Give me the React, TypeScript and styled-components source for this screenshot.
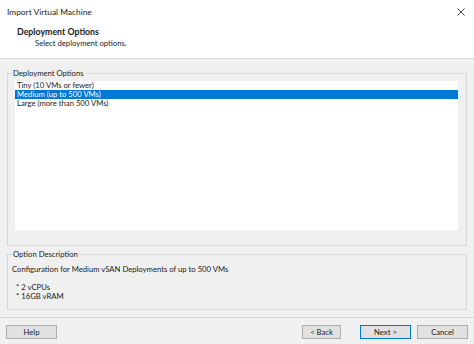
import React, { useState } from "react";
import styled, { createGlobalStyle } from "styled-components";

const GlobalStyle = createGlobalStyle`
  html, body {
    margin: 0;
    padding: 0;
    background: #f0f0f0;
  }
  * { box-sizing: border-box; }
`;

const FONT = `Lato, "Noto Sans", sans-serif`;
const TEXT = "7.7px";

const Window = styled.div`
  width: 474px;
  height: 344px;
  display: flex;
  flex-direction: column;
  background: #f0f0f0;
  font-family: ${FONT};
  font-size: ${TEXT};
  color: #1a1a1a;
  overflow: hidden;
`;

const Header = styled.div`
  height: 59px;
  background: #ffffff;
  border-bottom: 1px solid #d9d9d9;
  display: flex;
  flex-direction: column;
`;

const TitleBar = styled.div`
  height: 24px;
  display: flex;
  align-items: center;
  justify-content: space-between;
  padding: 0 8px 0 7px;
`;

const TitleText = styled.span`
  font-size: 8.4px;
  line-height: 10px;
`;

const CloseButton = styled.span`
  width: 10px;
  height: 10px;
  display: flex;
  align-items: center;
  justify-content: center;
`;

const PageTitle = styled.div`
  padding-left: 17px;
  margin-top: 3px;
  font-weight: 700;
  font-size: 8.8px;
  line-height: 10px;
`;

const PageSubtitle = styled.div`
  padding-left: 35px;
  margin-top: 1px;
  font-size: ${TEXT};
  line-height: 10px;
`;

const Body = styled.div`
  flex: 1;
  display: flex;
  flex-direction: column;
  gap: 3px;
  padding: 9px 7px 7px 7px;
`;

const GroupBox = styled.fieldset<{ $grow?: boolean }>`
  margin: 0;
  border: 1px solid #d8d8d8;
  padding: 0;
  min-width: 0;
  display: flex;
  flex-direction: column;
  ${(p) => (p.$grow ? "flex: 1;" : "")}
`;

const Legend = styled.legend`
  padding: 0 1px;
  margin-left: 4px;
  font-size: ${TEXT};
  line-height: 10px;
`;

const ListBox = styled.div`
  background: #ffffff;
  margin: 3px 8px 15px 7px;
  flex: 1;
  display: flex;
  flex-direction: column;
`;

const ListItem = styled.div<{ $selected?: boolean }>`
  height: 9px;
  line-height: 9px;
  padding-left: 2px;
  font-size: ${TEXT};
  white-space: nowrap;
  background: ${(p) => (p.$selected ? "#0078d7" : "transparent")};
  color: ${(p) => (p.$selected ? "#ffffff" : "#1a1a1a")};
  cursor: default;
`;

const Description = styled.div`
  padding: 6px 0 8px 4px;
  font-size: ${TEXT};
  line-height: 9px;
`;

const DescLine = styled.div<{ $indent?: boolean }>`
  height: 9px;
  white-space: nowrap;
  padding-left: ${(p) => (p.$indent ? "4px" : "0")};
`;

const Footer = styled.div`
  height: 27px;
  border-top: 1px solid #d4d4d4;
  display: flex;
  align-items: flex-start;
  padding: 7px 6px 0 6px;
`;

const Spacer = styled.div`
  flex: 1;
`;

const Button = styled.button<{ $focused?: boolean; $width?: number; $gapLeft?: number }>`
  height: 14px;
  width: ${(p) => p.$width ?? 51}px;
  margin-left: ${(p) => p.$gapLeft ?? 0}px;
  padding: 0;
  background: #e1e1e1;
  border: 1px solid ${(p) => (p.$focused ? "#0078d7" : "#adadad")};
  font-family: ${FONT};
  font-size: ${TEXT};
  line-height: 12px;
  color: #1a1a1a;
  cursor: default;
`;

const options = [
  "Tiny (10 VMs or fewer)",
  "Medium (up to 500 VMs)",
  "Large (more than 500 VMs)",
];

export default function App() {
  const [selected, setSelected] = useState(1);
  return (
    <>
      <GlobalStyle />
      <Window>
        <Header>
          <TitleBar>
            <TitleText>Import Virtual Machine</TitleText>
            <CloseButton>
              <svg width="8" height="8" viewBox="0 0 8 8">
                <path d="M0.5 0.5 L7.5 7.5 M7.5 0.5 L0.5 7.5" stroke="#333" strokeWidth="0.9" />
              </svg>
            </CloseButton>
          </TitleBar>
          <PageTitle>Deployment Options</PageTitle>
          <PageSubtitle>Select deployment options.</PageSubtitle>
        </Header>
        <Body>
          <GroupBox $grow>
            <Legend>Deployment Options</Legend>
            <ListBox>
              {options.map((o, i) => (
                <ListItem key={o} $selected={i === selected} onClick={() => setSelected(i)}>
                  {o}
                </ListItem>
              ))}
            </ListBox>
          </GroupBox>
          <GroupBox>
            <Legend>Option Description</Legend>
            <Description>
              <DescLine>Configuration for Medium vSAN Deployments of up to 500 VMs</DescLine>
              <DescLine />
              <DescLine $indent>* 2 vCPUs</DescLine>
              <DescLine $indent>* 16GB vRAM</DescLine>
            </Description>
          </GroupBox>
        </Body>
        <Footer>
          <Button>Help</Button>
          <Spacer />
          <Button $width={39}>&lt; Back</Button>
          <Button $focused $gapLeft={19}>Next &gt;</Button>
          <Button $gapLeft={6}>Cancel</Button>
        </Footer>
      </Window>
    </>
  );
}
